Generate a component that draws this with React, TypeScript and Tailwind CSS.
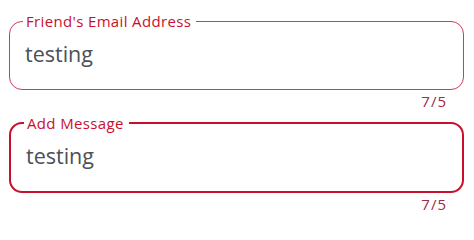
const Field = ({
  label,
  value,
  focused,
}: {
  label: string;
  value: string;
  focused?: boolean;
}) => {
  return (
    <div>
      <fieldset
        className={`rounded-[13px] pl-[15px] pr-[13px] pb-[21px] pt-[9px] ${
          focused ? "border-2 border-[#c8102e]" : "border-[1.5px] border-[#cc3d5c]"
        }`}
      >
        <legend className="-ml-[2px] pl-[3px] pr-[5px] text-[15px] leading-[20px] text-[#c8102e] tracking-[0.35px]">
          {label}
        </legend>
        <div className="text-[21.5px] leading-[28px] text-[#4b5059]">{value}</div>
      </fieldset>
      <div className="flex justify-end pr-[17px] pt-[2px] text-[15px] leading-[18px] text-[#a3284a] tracking-[1px]">
        7/5
      </div>
    </div>
  );
};

export default function App() {
  return (
    <div
      className="w-[474px] h-[219px] bg-white pl-[9px] pr-[10px] pt-[11px] flex flex-col gap-[3px]"
      style={{ fontFamily: "'Open Sans', 'Noto Sans', sans-serif" }}
    >
      <Field label="Friend's Email Address" value="testing" />
      <Field label="Add Message" value="testing" focused />
    </div>
  );
}
